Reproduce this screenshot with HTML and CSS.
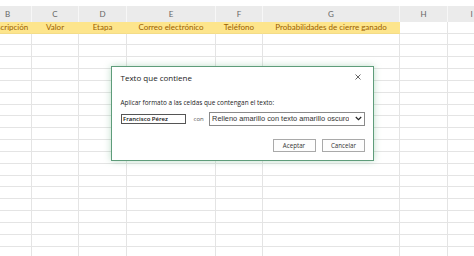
FILE: index.html
```html
<!DOCTYPE html>
<html lang="es">
<head>
<meta charset="UTF-8">
<meta name="viewport" content="width=device-width, initial-scale=1.0">
<title>Texto que contiene</title>
<link rel="stylesheet" href="styles.css">
</head>
<body>
<div class="sheet">
  <div class="top-strip"></div>
  <div class="grid" id="grid">
    <div class="col-head">B</div>
    <div class="col-head">C</div>
    <div class="col-head">D</div>
    <div class="col-head">E</div>
    <div class="col-head">F</div>
    <div class="col-head">G</div>
    <div class="col-head">H</div>
    <div class="col-head">I</div>

    <div class="cell hl">Descripción</div>
    <div class="cell hl">Valor</div>
    <div class="cell hl">Etapa</div>
    <div class="cell hl">Correo electrónico</div>
    <div class="cell hl">Teléfono</div>
    <div class="cell hl">Probabilidades de cierre ganado</div>
    <div class="cell"></div>
    <div class="cell"></div>
  </div>
</div>

<div class="dialog">
  <div class="dialog-head">
    <span class="dialog-title">Texto que contiene</span>
    <svg class="dialog-close" width="6" height="6" viewBox="0 0 6 6"><path d="M0.5 0.5 L5.5 5.5 M5.5 0.5 L0.5 5.5" stroke="#666" stroke-width="1"/></svg>
  </div>
  <div class="dialog-label">Aplicar formato a las celdas que contengan el texto:</div>
  <div class="dialog-row">
    <div class="text-input">Francisco Pérez</div>
    <span class="con">con</span>
    <div class="select">
      <span class="select-text">Relleno amarillo con texto amarillo oscuro</span>
      <svg class="chev" width="7" height="5" viewBox="0 0 7 5"><path d="M0.8 1 L3.5 3.7 L6.2 1" fill="none" stroke="#222" stroke-width="1.2"/></svg>
    </div>
  </div>
  <div class="dialog-buttons">
    <button class="btn">Aceptar</button>
    <button class="btn">Cancelar</button>
  </div>
</div>

<script>
  // empty rows under the highlighted header row
  const grid = document.getElementById('grid');
  for (let r = 0; r < 19; r++) {
    for (let c = 0; c < 8; c++) {
      const cell = document.createElement('div');
      cell.className = 'cell';
      grid.appendChild(cell);
    }
  }
</script>
</body>
</html>
```

FILE: styles.css
```css
body {
  margin: 0;
  background-color: #fff;
  font-family: 'Lato', 'Open Sans', sans-serif;
  overflow: hidden;
}
.sheet {
  margin-left: -16px;
}
.top-strip {
  height: 6px;
}
.grid {
  display: grid;
  grid-template-columns: 48px 47px 48px 89px 47px 137px 48px 48px;
  grid-auto-rows: 11.85px;
  grid-template-rows: 16px 11.5px;
}
.col-head {
  background-color: #ebebeb;
  border-right: 1px solid #f7f7f7;
  color: #666;
  font-size: 8px;
  line-height: 16px;
  text-align: center;
}
.cell {
  border-right: 1px solid #e4e4e4;
  border-bottom: 1px solid #e4e4e4;
  font-size: 8px;
  line-height: 11px;
  text-align: center;
  white-space: nowrap;
  overflow: hidden;
}
.cell.hl {
  background-color: #fde58c;
  color: #9c5f00;
  border-right-color: #fde58c;
  border-bottom-color: #f3dc88;
}

.dialog {
  position: absolute;
  left: 111px;
  top: 66px;
  width: 263px;
  height: 95px;
  box-sizing: border-box;
  border: 1px solid #5e9c7a;
  background-color: #fff;
  box-shadow: 0 0 7px rgba(90, 170, 120, 0.4);
  padding: 0 8px 0 8.5px;
  font-family: 'Open Sans', 'Liberation Sans', sans-serif;
  color: #222;
}
.dialog-head {
  display: flex;
  justify-content: space-between;
  align-items: center;
  height: 20px;
}
.dialog-title {
  font-size: 8px;
}
.dialog-close {
  margin-right: 4px;
}
.dialog-label {
  margin-top: 11px;
  font-size: 6.4px;
  line-height: 10px;
}
.dialog-row {
  display: flex;
  align-items: center;
  height: 14px;
  margin-top: 3.5px;
}
.text-input {
  width: 67px;
  height: 10px;
  box-sizing: border-box;
  border: 1px solid #555;
  font-size: 6px;
  font-weight: 600;
  color: #111;
  line-height: 8px;
  padding-left: 1.5px;
}
.con {
  font-size: 6px;
  color: #555;
  margin-left: 8px;
  width: 10px;
}
.select {
  margin-left: 5px;
  width: 161px;
  height: 14px;
  box-sizing: border-box;
  border: 1px solid #8a8a8a;
  display: flex;
  align-items: center;
  justify-content: space-between;
  padding: 0 2.5px 0 2.5px;
  font-family: 'Liberation Sans', sans-serif;
  font-size: 7.4px;
  color: #333;
  white-space: nowrap;
}
.select-text {
  overflow: hidden;
}
.chev {
  flex-shrink: 0;
}
.dialog-buttons {
  display: flex;
  justify-content: flex-end;
  gap: 6.5px;
  margin-top: 13.3px;
}
.btn {
  width: 43px;
  height: 13px;
  box-sizing: border-box;
  border: 1px solid #a9a9a9;
  background-color: #fdfdfd;
  font-family: 'Open Sans', sans-serif;
  font-size: 6.2px;
  color: #333;
  padding: 0;
}
```
